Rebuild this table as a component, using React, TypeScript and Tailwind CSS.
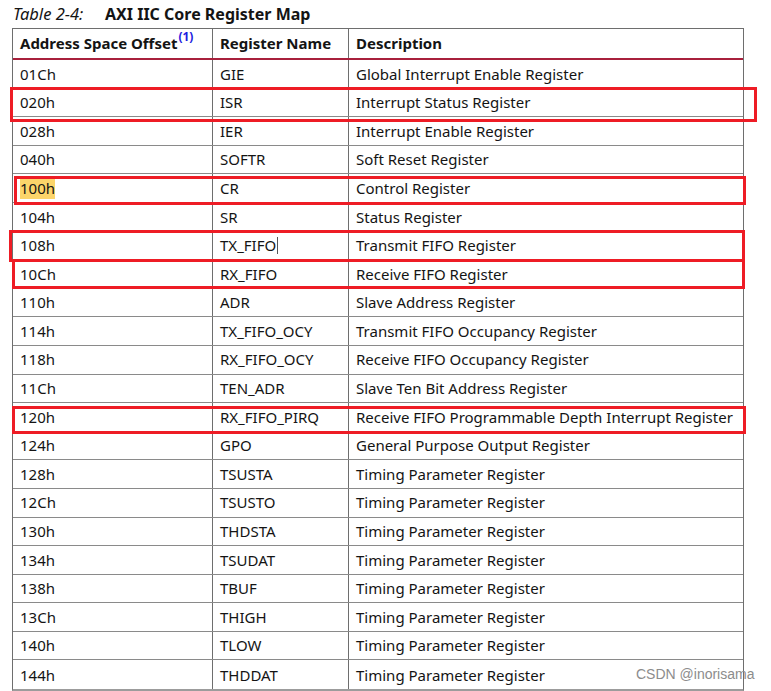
const rows: [string, string, string][] = [
  ["01Ch", "GIE", "Global Interrupt Enable Register"],
  ["020h", "ISR", "Interrupt Status Register"],
  ["028h", "IER", "Interrupt Enable Register"],
  ["040h", "SOFTR", "Soft Reset Register"],
  ["100h", "CR", "Control Register"],
  ["104h", "SR", "Status Register"],
  ["108h", "TX_FIFO", "Transmit FIFO Register"],
  ["10Ch", "RX_FIFO", "Receive FIFO Register"],
  ["110h", "ADR", "Slave Address Register"],
  ["114h", "TX_FIFO_OCY", "Transmit FIFO Occupancy Register"],
  ["118h", "RX_FIFO_OCY", "Receive FIFO Occupancy Register"],
  ["11Ch", "TEN_ADR", "Slave Ten Bit Address Register"],
  ["120h", "RX_FIFO_PIRQ", "Receive FIFO Programmable Depth Interrupt Register"],
  ["124h", "GPO", "General Purpose Output Register"],
  ["128h", "TSUSTA", "Timing Parameter Register"],
  ["12Ch", "TSUSTO", "Timing Parameter Register"],
  ["130h", "THDSTA", "Timing Parameter Register"],
  ["134h", "TSUDAT", "Timing Parameter Register"],
  ["138h", "TBUF", "Timing Parameter Register"],
  ["13Ch", "THIGH", "Timing Parameter Register"],
  ["140h", "TLOW", "Timing Parameter Register"],
  ["144h", "THDDAT", "Timing Parameter Register"],
];

// annotation boxes drawn on top of the scanned table
const marks = [
  { top: 87, left: 10, width: 747, height: 35 },
  { top: 176, left: 14, width: 732, height: 29 },
  { top: 230, left: 9, width: 736, height: 32 },
  { top: 259, left: 12, width: 733, height: 30 },
  { top: 406, left: 12, width: 734, height: 28 },
];

export default function App() {
  return (
    <div className="relative w-[771px] h-[691px] bg-white text-[#141414] font-['Noto_Sans',sans-serif] overflow-hidden">
      <div className="flex items-baseline h-[28px] pl-[13px] pt-[2px] text-[16px]">
        <span className="italic w-[92px] text-[16.5px]">Table 2-4:</span>
        <span className="font-bold">AXI IIC Core Register Map</span>
      </div>

      <div className="ml-[12px] w-[732px] border border-[#6e6e6e] border-b-2 border-b-[#9c9c9c]">
        <div className="grid grid-cols-[200px_136px_1fr] h-[31px] border-b-2 border-b-[#a8203c] font-bold text-[15px]">
          <div className="flex items-center px-[7px] border-r border-[#6e6e6e]">
            Address Space Offset
            <span className="relative -top-[7px] ml-[1px] text-[#1c1ce0] text-[12px]">(1)</span>
          </div>
          <div className="flex items-center px-[7px] border-r border-[#6e6e6e]">Register Name</div>
          <div className="flex items-center px-[7px]">Description</div>
        </div>
        {rows.map(([addr, name, desc], i) => (
          <div
            key={addr}
            className={`grid grid-cols-[200px_136px_1fr] h-[28.6px] text-[15px] ${i < rows.length - 1 ? "border-b border-[#8a8a8a]" : ""}`}
          >
            <div className="flex items-center px-[7px] border-r border-[#6e6e6e]">
              {addr === "100h" ? <span className="bg-[#fcd56a]">{addr}</span> : addr}
            </div>
            <div className="flex items-center px-[7px] border-r border-[#6e6e6e]">
              {name}
              {name === "TX_FIFO" && <span className="ml-[1px] w-px h-[17px] bg-[#555]" />}
            </div>
            <div className="flex items-center px-[7px] whitespace-nowrap">{desc}</div>
          </div>
        ))}
      </div>

      {marks.map((m, i) => (
        <div
          key={i}
          className="absolute border-[3px] border-[#ee1c25] pointer-events-none"
          style={{ top: m.top, left: m.left, width: m.width, height: m.height }}
        />
      ))}

      <div className="absolute left-[636px] top-[664px] text-[14px] text-[#8c8c8c] font-['Liberation_Sans',sans-serif]">
        CSDN @inorisama
      </div>
    </div>
  );
}
